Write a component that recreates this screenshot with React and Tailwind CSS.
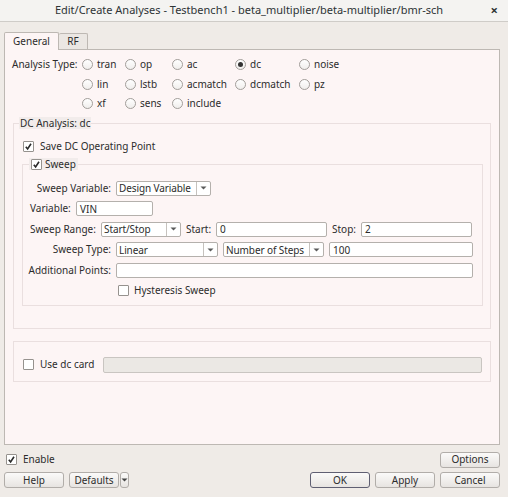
import React from 'react'

const Check = ({ checked }) => (
    <div className='w-[11px] h-[11px] shrink-0 border border-[#96928e] bg-white rounded-[1px] flex items-center justify-center'>
        {checked &&
            <svg width="9" height="9" viewBox="0 0 9 9">
                <path d="M1.8 4.8 L3.6 7 L7 1.8" fill="none" stroke="#2a2a2a" strokeWidth="1.6" />
            </svg>
        }
    </div>
)

const Radio = ({ label, checked, w }) => (
    <div className={'flex items-center h-full whitespace-nowrap ' + w}>
        <div className='w-[11px] h-[11px] shrink-0 rounded-full border border-[#a29e9a] bg-gradient-to-b from-[#ffffff] to-[#f0eeec] flex items-center justify-center'>
            {checked && <div className='w-[5px] h-[5px] rounded-full bg-[#333]'></div>}
        </div>
        <span className='ml-[4px]'>{label}</span>
    </div>
)

const Input = ({ value, w, disabled }) => (
    <div className={'h-[15px] shrink-0 border rounded-[2px] px-[3px] flex items-center leading-none whitespace-nowrap ' + w + (disabled ? ' bg-[#ebe8e4] border-[#c9c5c1]' : ' bg-white border-[#b4b0ac]')}>
        {value}
    </div>
)

const Combo = ({ value, w }) => (
    <div className={'h-[15px] shrink-0 border border-[#b4b0ac] rounded-[2px] bg-white flex items-center ' + w}>
        <span className='flex-1 pl-[2px] leading-none whitespace-nowrap tracking-[-0.1px]'>{value}</span>
        <div className='w-[14px] h-full shrink-0 border-l border-[#c6c2be] flex items-center justify-center'>
            <svg width="7" height="4" viewBox="0 0 7 4"><path d="M0.5 0.5 L6.5 0.5 L3.5 3.5 Z" fill="#5a5a5a" /></svg>
        </div>
    </div>
)

const Button = ({ children, w, def }) => (
    <div className={'h-[16px] border rounded-[3px] bg-gradient-to-b from-[#fbfaf9] to-[#e7e4e1] flex items-center justify-center ' + w + (def ? ' border-[#5f5f72]' : ' border-[#b1ada9]')}>
        {children}
    </div>
)

const App = () => {
    const rows = [
        [['tran', false], ['op', false], ['ac', false], ['dc', true], ['noise', false]],
        [['lin', false], ['lstb', false], ['acmatch', false], ['dcmatch', false], ['pz', false]],
        [['xf', false], ['sens', false], ['include', false]],
    ]
    const colW = ['w-[43px]', 'w-[47px]', 'w-[63px]', 'w-[64px]', 'w-[50px]']

    return (
        <div className='w-[508px] h-[497px] bg-[#efebe7] text-[#2c2c2c] text-[10px] overflow-hidden' style={{ fontFamily: '"Noto Sans", sans-serif' }}>
            {/* title bar */}
            <div className='h-[22px] bg-[#f4f3f1] border-b border-[#cfccc8] flex items-center text-[11px] text-[#2e3436]'>
                <div className='flex-1'></div>
                <div className='whitespace-nowrap'>Edit/Create Analyses - Testbench1 - beta_multiplier/beta-multiplier/bmr-sch</div>
                <div className='flex-1 flex justify-end pr-[10px] text-[13px] font-bold'>×</div>
            </div>

            {/* tabs */}
            <div className='mt-[10px] ml-[4px] h-[17px] flex items-end'>
                <div className='w-[55px] h-[18px] -mb-[1px] bg-[#fdf5f5] border border-b-0 border-[#bdb8b3] rounded-t-[2px] flex items-center justify-center relative z-10'>General</div>
                <div className='w-[29px] h-[16px] bg-[#ebe7e3] border border-l-0 border-b-0 border-[#bdb8b3] rounded-t-[2px] flex items-center justify-center'>RF</div>
            </div>

            {/* panel */}
            <div className='ml-[4px] w-[496px] h-[396px] bg-[#fdf5f5] border border-[#bdb8b3]'>
                <div className='pt-[5px] flex'>
                    <div className='w-[72px] pl-[7px] h-[19.5px] flex items-center whitespace-nowrap'>Analysis Type:</div>
                    <div className='ml-[5px]'>
                        {rows.map((row, i) => (
                            <div key={i} className='h-[19.5px] flex'>
                                {row.map(([label, checked], j) => (
                                    <Radio key={label} label={label} checked={checked} w={colW[j]} />
                                ))}
                            </div>
                        ))}
                    </div>
                </div>

                {/* DC Analysis group */}
                <div className='mt-[9.5px] mx-[8px] border border-[#eadfdf]'>
                    <div className='-mt-[7px] ml-[5px] h-[12px] leading-[12px] w-fit px-[1px] bg-[#f2eceb]'>DC Analysis: dc</div>
                    <div className='mt-[10px] ml-[9px] h-[14px] flex items-center'>
                        <Check checked />
                        <span className='ml-[6px]'>Save DC Operating Point</span>
                    </div>

                    {/* Sweep group */}
                    <div className='mt-[11px] ml-[8px] mr-[7px] mb-[22px] border border-[#eadfdf] pb-[4px]'>
                        <div className='-mt-[7px] ml-[6px] h-[12px] w-fit px-[2px] bg-[#f2eceb] flex items-center'>
                            <Check checked />
                            <span className='ml-[3px]'>Sweep</span>
                        </div>
                        <div className='mt-[8px] pl-[7px] whitespace-nowrap'>
                            <div className='h-[20.5px] flex items-center'>
                                <div className='w-[81px] shrink-0 flex justify-end'>Sweep Variable:</div>
                                <div className='ml-[5px]'><Combo value='Design Variable' w='w-[95px]' /></div>
                            </div>
                            <div className='h-[20.5px] flex items-center'>
                                <div className='w-[46px] shrink-0'>Variable:</div>
                                <Input value='VIN' w='w-[77px]' />
                            </div>
                            <div className='h-[20.5px] flex items-center'>
                                <div className='w-[71px] shrink-0'>Sweep Range:</div>
                                <Combo value='Start/Stop' w='w-[80px]' />
                                <div className='ml-[5px] w-[30px] shrink-0'>Start:</div>
                                <Input value='0' w='w-[111px]' />
                                <div className='ml-[5px] w-[29px] shrink-0'>Stop:</div>
                                <Input value='2' w='w-[111px]' />
                            </div>
                            <div className='h-[20.5px] flex items-center'>
                                <div className='w-[81px] shrink-0 flex justify-end'>Sweep Type:</div>
                                <div className='ml-[5px]'><Combo value='Linear' w='w-[102px]' /></div>
                                <div className='ml-[5px]'><Combo value='Number of Steps' w='w-[101px]' /></div>
                                <div className='ml-[5px]'><Input value='100' w='w-[144px]' /></div>
                            </div>
                            <div className='h-[20.5px] flex items-center'>
                                <div className='w-[81px] shrink-0 flex justify-end'>Additional Points:</div>
                                <div className='ml-[5px]'><Input value='' w='w-[357px]' /></div>
                            </div>
                            <div className='h-[20.5px] flex items-center pl-[88px]'>
                                <Check />
                                <span className='ml-[5px]'>Hysteresis Sweep</span>
                            </div>
                        </div>
                    </div>
                </div>

                {/* dc card group */}
                <div className='mt-[12px] mx-[8px] border border-[#eadfdf] pt-[14.5px] pb-[8px] pl-[9px] pr-[8px]'>
                    <div className='h-[16px] flex items-center'>
                        <Check />
                        <span className='ml-[6px] w-[63px] shrink-0 whitespace-nowrap'>Use dc card</span>
                        <div className='flex-1 h-[16px] bg-[#ebe8e4] border border-[#c9c5c1] rounded-[2px]'></div>
                    </div>
                </div>
            </div>

            {/* bottom */}
            <div className='mt-[7px] h-[15px] flex items-center pl-[6px] pr-[8px]'>
                <Check checked />
                <span className='ml-[6px]'>Enable</span>
                <div className='ml-auto'><Button w='w-[60px]'>Options</Button></div>
            </div>
            <div className='mt-[5px] flex items-center pl-[4px] pr-[8px]'>
                <Button w='w-[60px]'>Help</Button>
                <div className='ml-[5px]'><Button w='w-[50px]'>Defaults</Button></div>
                <div className='ml-[1px]'>
                    <Button w='w-[9px]'>
                        <svg width="7" height="4" viewBox="0 0 7 4"><path d="M0.5 0.5 L6.5 0.5 L3.5 3.5 Z" fill="#444" /></svg>
                    </Button>
                </div>
                <div className='ml-auto'><Button w='w-[60px]' def>OK</Button></div>
                <div className='ml-[5px]'><Button w='w-[60px]'>Apply</Button></div>
                <div className='ml-[5px]'><Button w='w-[60px]'>Cancel</Button></div>
            </div>
        </div>
    )
}

export default App
